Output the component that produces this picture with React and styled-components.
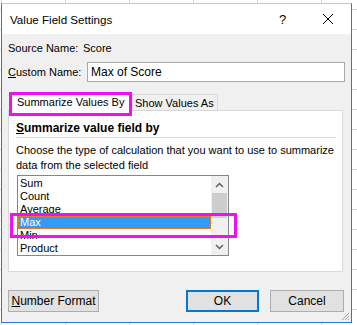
import React from 'react';
import styled, {createGlobalStyle} from 'styled-components';

const GlobalStyle = createGlobalStyle`
html, body {
  margin: 0;
  padding: 0;
}
body {
  width: 357px;
  height: 325px;
  overflow: hidden;
  font-family: "Liberation Sans", Arial, sans-serif;
  font-size: 11px;
  white-space: nowrap;
  color: #000;
  background-color: #fff;
  background-image:
    linear-gradient(to right, #d4d4d4 1px, transparent 1px),
    linear-gradient(to bottom, #d4d4d4 1px, transparent 1px);
  background-size: 64px 20px;
  background-position: 1px 9px;
}
`;

const Page = styled.div`
padding: 3px 0 0 1px;
`;

const Dialog = styled.div`
position: relative;
width: 349px;
height: 318px;
border: 1px solid #2b7ad0;
border-top-color: #b9c9dc;
background: #f0f0f0;
display: flex;
flex-direction: column;
`;

const TitleBar = styled.div`
height: 30px;
background: #fff;
display: flex;
align-items: center;
padding-left: 8px;
`;

const Title = styled.div`
flex: 1;
font-size: 11.6px;
`;

const HelpBtn = styled.div`
width: 12px;
font-size: 13px;
margin-right: 31px;
`;

const CloseBtn = styled.div`
width: 12px;
height: 12px;
margin-right: 17px;
display: flex;
`;

const Body = styled.div`
flex: 1;
padding: 0 6px 0 6px;
display: flex;
flex-direction: column;
`;

const FieldRow = styled.div`
display: flex;
align-items: center;
height: ${p => p.h}px;
margin-top: ${p => p.mt || 0}px;
`;

const Label = styled.div`
width: ${p => p.w}px;
flex-shrink: 0;
`;

const TextInput = styled.div`
width: 253px;
height: 18px;
border: 1px solid #a9a9a9;
background: #fff;
display: flex;
align-items: center;
padding-left: 3px;
box-sizing: content-box;
font-size: 12px;
`;

const Tabs = styled.div`
display: flex;
align-items: flex-end;
margin-top: 10px;
height: 19px;
padding-left: 2px;
position: relative;
z-index: 1;
`;

const Tab = styled.div`
width: ${p => p.w}px;
height: ${p => (p.active ? 19 : 17)}px;
padding-left: ${p => (p.active ? 6 : 2)}px;
display: flex;
align-items: center;
background: ${p => (p.active ? '#fff' : '#f0f0f0')};
border: 1px solid #d9d9d9;
border-bottom: ${p => (p.active ? 'none' : '1px solid #d9d9d9')};
box-sizing: border-box;
`;

const Panel = styled.div`
width: 335px;
height: 162px;
background: #fff;
border: 1px solid #d9d9d9;
box-sizing: border-box;
padding: 0 7px;
margin-top: -1px;
`;

const Heading = styled.div`
font-weight: bold;
font-size: 12px;
height: 16px;
margin-top: 9px;
display: flex;
align-items: center;
`;

const Rule = styled.div`
height: 1px;
background: #d9d9d9;
margin-top: 1px;
width: 320px;
`;

const Para = styled.div`
margin-top: 5px;
line-height: 15px;
font-size: 11px;
`;

const ListBox = styled.div`
width: 212px;
height: 81px;
border: 1px solid #828790;
box-sizing: border-box;
margin-top: 2px;
margin-left: 1px;
display: flex;
background: #fff;
`;

const Items = styled.div`
flex: 1;
padding-top: 1px;
overflow: hidden;
`;

const Item = styled.div`
height: 13px;
line-height: 13px;
padding-left: 2px;
background: ${p => (p.selected ? '#3399ff' : 'transparent')};
color: ${p => (p.selected ? '#fff' : '#000')};
outline: ${p => (p.selected ? '1px dotted #e08a30' : 'none')};
outline-offset: -1px;
`;

const ScrollBar = styled.div`
width: 17px;
background: #f0f0f0;
display: flex;
flex-direction: column;
`;

const Arrow = styled.div`
height: 17px;
display: flex;
align-items: center;
justify-content: center;
`;

const Thumb = styled.div`
height: 25px;
background: #cdcdcd;
margin: 0 1px;
`;

const Spacer = styled.div`
flex: 1;
`;

const Buttons = styled.div`
display: flex;
margin-top: 18px;
`;

const Button = styled.div`
width: ${p => p.w}px;
height: 22px;
margin-left: ${p => p.ml || 0}px;
box-sizing: border-box;
background: #e1e1e1;
border: ${p => (p.primary ? '2px solid #0078d7' : '1px solid #adadad')};
display: flex;
align-items: center;
justify-content: center;
font-size: 12px;
`;

const U = styled.span`
text-decoration: underline;
`;

const Callout = styled.div`
position: absolute;
left: ${p => p.x}px;
top: ${p => p.y}px;
width: ${p => p.w}px;
height: ${p => p.h}px;
border: 3px solid #ee10ee;
box-sizing: border-box;
z-index: 5;
pointer-events: none;
`;

const Grip = styled.svg`
position: absolute;
right: 1px;
bottom: 1px;
`;

const items = ['Sum', 'Count', 'Average', 'Max', 'Min', 'Product'];

export default function App() {
  return (
    <>
      <GlobalStyle />
      <Page>
        <Dialog>
          <TitleBar>
            <Title>Value Field Settings</Title>
            <HelpBtn>?</HelpBtn>
            <CloseBtn>
              <svg width="12" height="12" viewBox="0 0 12 12">
                <path d="M1 1 L11 11 M11 1 L1 11" stroke="#000" strokeWidth="1" />
              </svg>
            </CloseBtn>
          </TitleBar>
          <Body>
            <FieldRow h={20} mt={4}>
              <Label w={75}>Source Name:</Label>
              <span>Score</span>
            </FieldRow>
            <FieldRow h={20} mt={4}>
              <Label w={79}><U>C</U>ustom Name:</Label>
              <TextInput>Max of Score</TextInput>
            </FieldRow>
            <Tabs>
              <Tab active w={122}>Summarize Values By</Tab>
              <Tab w={86}>Show Values As</Tab>
            </Tabs>
            <Panel>
              <Heading><U>S</U>ummarize value field by</Heading>
              <Rule />
              <Para>
                Choose the type of calculation that you want to use to summarize
                <br />
                data from the selected field
              </Para>
              <ListBox>
                <Items>
                  {items.map(i => (
                    <Item key={i} selected={i === 'Max'}>{i}</Item>
                  ))}
                </Items>
                <ScrollBar>
                  <Arrow>
                    <svg width="9" height="6" viewBox="0 0 9 6">
                      <path d="M1 5 L4.5 1.5 L8 5" stroke="#606060" strokeWidth="1.5" fill="none" />
                    </svg>
                  </Arrow>
                  <Thumb />
                  <Spacer />
                  <Arrow>
                    <svg width="9" height="6" viewBox="0 0 9 6">
                      <path d="M1 1 L4.5 4.5 L8 1" stroke="#606060" strokeWidth="1.5" fill="none" />
                    </svg>
                  </Arrow>
                </ScrollBar>
              </ListBox>
            </Panel>
            <Buttons>
              <Button w={91}><U>N</U>umber Format</Button>
              <Button w={73} ml={87} primary>OK</Button>
              <Button w={74} ml={11}>Cancel</Button>
            </Buttons>
          </Body>
          <Grip width="10" height="10" viewBox="0 0 10 10">
            <path d="M9 2 L2 9 M9 5 L5 9 M9 8 L8 9" stroke="#a0a0a0" strokeWidth="1" />
          </Grip>
          <Callout x={7} y={88} w={123} h={24} />
          <Callout x={8} y={209} w={227} h={25} />
        </Dialog>
      </Page>
    </>
  );
}
